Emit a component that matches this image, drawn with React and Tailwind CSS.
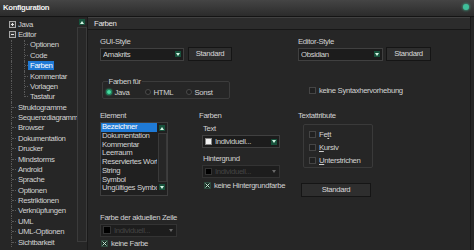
import React from "react";

const LINE = "border-[#595959]";

function Arrow({ up = false, dim = false }) {
  if (dim) {
    return (
      <span className="w-[6px] h-[6px] shrink-0 flex items-center justify-center">
        <span className="w-0 h-0 border-l-[2.5px] border-r-[2.5px] border-t-[3px] border-l-transparent border-r-transparent border-t-[#6a6a6a]" />
      </span>
    );
  }
  return (
    <span className="w-[6px] h-[6px] shrink-0 bg-[#17523c] flex items-center justify-center">
      {up ? (
        <span className="w-0 h-0 border-l-[2px] border-r-[2px] border-b-[3px] border-l-transparent border-r-transparent border-b-[#d6f7e6]" />
      ) : (
        <span className="w-0 h-0 border-l-[2px] border-r-[2px] border-t-[3px] border-l-transparent border-r-transparent border-t-[#d6f7e6]" />
      )}
    </span>
  );
}

function Combo({ w, children, disabled = false }) {
  return (
    <div
      className={
        disabled
          ? `${w} h-[13px] shrink-0 flex items-center border border-[#333333] bg-[#1d1d1d] pl-[2px] pr-[2px]`
          : `${w} h-[13px] shrink-0 flex items-center border border-[#404040] bg-[#1c1c1c] pl-[2px] pr-[2px]`
      }
    >
      <div className="flex-1 min-w-0 flex items-center gap-[3px] overflow-hidden whitespace-nowrap">{children}</div>
      <Arrow dim={disabled} />
    </div>
  );
}

function Button({ w, children }) {
  return (
    <div className={`${w} h-[14px] shrink-0 flex items-center justify-center border border-[#151515] bg-[#2e2e2e] text-[#d8d8d8]`}>
      {children}
    </div>
  );
}

function Check({ checked = false, children }) {
  return (
    <div className="flex items-center gap-[3px] whitespace-nowrap h-[9px]">
      {checked ? (
        <span className="w-[7px] h-[7px] shrink-0 border border-[#2c4a3d] bg-[#1c2d26] flex items-center justify-center">
          <svg width="5" height="5" viewBox="0 0 5 5">
            <path d="M0.5 0.5 L4.5 4.5 M4.5 0.5 L0.5 4.5" stroke="#bfe6d1" strokeWidth="1" />
          </svg>
        </span>
      ) : (
        <span className="w-[7px] h-[7px] shrink-0 border border-[#454545] bg-[#202020]" />
      )}
      <span>{children}</span>
    </div>
  );
}

function Radio({ selected = false, children, w }) {
  return (
    <div className={`${w} shrink-0 flex items-center gap-[3px]`}>
      {selected ? (
        <span className="w-[6px] h-[6px] rounded-full bg-[#46dca0] border border-[#1d7a57] shadow-[0_0_2px_#2fbf86]" />
      ) : (
        <span className="w-[6px] h-[6px] rounded-full bg-[#1f1f1f] border border-[#4a4a4a]" />
      )}
      <span>{children}</span>
    </div>
  );
}

const treeItems = [
  { t: "Java", exp: "+" },
  { t: "Editor", exp: "-" },
  { t: "Optionen", l: 1 },
  { t: "Code", l: 1 },
  { t: "Farben", l: 1, sel: true },
  { t: "Kommentar", l: 1 },
  { t: "Vorlagen", l: 1 },
  { t: "Tastatur", l: 1, last: true },
  { t: "Struktogramme" },
  { t: "Sequenzdiagramm" },
  { t: "Browser" },
  { t: "Dokumentation" },
  { t: "Drucker" },
  { t: "Mindstorms" },
  { t: "Android" },
  { t: "Sprache" },
  { t: "Optionen" },
  { t: "Restriktionen" },
  { t: "Verknüpfungen" },
  { t: "UML" },
  { t: "UML-Optionen" },
  { t: "Sichtbarkeit" },
];

function Expander({ plus }) {
  return (
    <svg width="7" height="7" viewBox="0 0 7 7">
      <rect x="0.5" y="0.5" width="6" height="6" fill="#3a3a3a" stroke="#a8a8a8" strokeWidth="1" />
      <path d="M2 3.5 H5" stroke="#e6e6e6" strokeWidth="1" />
      {plus && <path d="M3.5 2 V5" stroke="#e6e6e6" strokeWidth="1" />}
    </svg>
  );
}

function TreeRow({ item }) {
  const { t, l = 0, exp, sel, last } = item;
  return (
    <div className="flex h-[10.38px] items-stretch">
      <div className="w-[8px] shrink-0" />
      {exp ? (
        <div className="w-[8px] shrink-0 flex items-center">
          <span className="ml-px flex">
            <Expander plus={exp === "+"} />
          </span>
        </div>
      ) : (
        <div className="w-[8px] shrink-0 flex">
          <div className="w-[3px]" />
          <div className={`w-px border-l border-dotted ${LINE}`} />
          {l === 0 && (
            <div className="flex items-center">
              <div className={`w-[4px] border-t border-dotted ${LINE}`} />
            </div>
          )}
        </div>
      )}
      {l === 1 && (
        <div className="w-[12px] shrink-0 flex">
          <div className="w-[8px]" />
          <div className="w-px flex flex-col">
            <div className={last ? `h-1/2 border-l border-dotted ${LINE}` : `flex-1 border-l border-dotted ${LINE}`} />
          </div>
          <div className="flex items-center">
            <div className={`w-[3px] border-t border-dotted ${LINE}`} />
          </div>
        </div>
      )}
      <div className="flex items-center whitespace-nowrap">
        <span className={sel ? "px-[2px] h-[8.5px] flex items-center bg-[#1f7ad6] text-white" : "px-[2px]"}>{t}</span>
      </div>
    </div>
  );
}

const listItems = [
  "Bezeichner",
  "Dokumentation",
  "Kommentar",
  "Leerraum",
  "Reserviertes Wort",
  "String",
  "Symbol",
  "Ungültiges Symbol",
];

export default function App() {
  return (
    <div className="w-[474px] h-[250px] overflow-hidden bg-[#262626] text-[#d2d2d2] font-['Liberation_Sans',Arial,sans-serif] text-[7.75px] tracking-[-0.35px] leading-[9px] flex flex-col">
      {/* Title bar */}
      <div className="h-[17px] shrink-0 flex items-center justify-between pl-[3px] pr-[5px] bg-gradient-to-b from-[#454545] to-[#2b2b2b] border-b border-[#141414]">
        <span className="font-bold text-[#f0f0f0] -mt-px">Konfiguration</span>
        <span className="w-[6px] h-[6px] rounded-full bg-[#3fbf9a] shadow-[0_0_3px_#3fd4a6] -mt-[2px]" />
      </div>

      <div className="flex flex-1 min-h-0">
        {/* Tree */}
        <div className="w-[77px] shrink-0 pt-[2px] overflow-hidden">
          {treeItems.map((it, i) => (
            <TreeRow key={i} item={it} />
          ))}
        </div>

        {/* Tree scrollbar */}
        <div className="w-[10px] shrink-0 flex flex-col items-center pt-[2px] pb-[8px]">
          <Arrow up />
          <div className="mt-[2px] w-[10px] flex-1 border border-[#3b3b3b] bg-[#282828]" />
        </div>

        {/* Panel */}
        <div className="w-[384px] shrink-0 flex flex-col border-l border-r border-[#1a1a1a]">
          <div className="h-[13px] shrink-0 flex items-center pl-[6px] bg-[#2c2c2c] border-t border-[#414141] border-b border-b-[#171717] text-[#e6e6e6]">
            Farben
          </div>

          <div className="pl-[12px]">
            {/* Row 1 */}
            <div className="grid grid-cols-[99px_98px_1fr] pt-[7px]">
              <div className="col-span-2">
                <div>GUI-Style</div>
                <div className="flex items-end gap-[4px] mt-[0.5px]">
                  <Combo w="w-[84px]">
                    <span>Amakrits</span>
                  </Combo>
                  <Button w="w-[44px]">Standard</Button>
                </div>
              </div>
              <div className="pl-px">
                <div>Editor-Style</div>
                <div className="flex items-end gap-[3px] mt-[0.5px]">
                  <Combo w="w-[85px]">
                    <span>Obsidian</span>
                  </Combo>
                  <Button w="w-[45px]">Standard</Button>
                </div>
              </div>
            </div>

            {/* Row 2 */}
            <div className="grid grid-cols-[99px_98px_1fr] mt-[16px]">
              <div className="col-span-2">
                <fieldset className="ml-[1.5px] w-[124px] border border-[#3c3c3c] rounded-[2px] px-[3px] pb-px">
                  <legend className="ml-[2px] px-px">Farben für</legend>
                  <div className="flex items-center h-[10px] mt-[1.5px]">
                    <Radio selected w="w-[39px]">
                      Java
                    </Radio>
                    <Radio w="w-[41px]">HTML</Radio>
                    <Radio w="w-[40px]">Sonst</Radio>
                  </div>
                </fieldset>
              </div>
              <div className="pl-[12px] pt-[9.5px]">
                <Check>keine Syntaxhervorhebung</Check>
              </div>
            </div>

            {/* Row 3 */}
            <div className="grid grid-cols-[99px_98px_1fr] mt-[11.5px]">
              <div>
                <div>Element</div>
                <div className="mt-[2.5px] w-[68px] h-[74px] border border-[#3e3e3e] bg-[#202020] flex">
                  <div className="flex-1 min-w-0 overflow-hidden">
                    {listItems.map((s, i) => (
                      <div
                        key={i}
                        className={
                          i === 0
                            ? "h-[8.75px] leading-[8.75px] pl-px whitespace-nowrap bg-[#1f7ad6] text-white"
                            : "h-[8.75px] leading-[8.75px] pl-px whitespace-nowrap"
                        }
                      >
                        {s}
                      </div>
                    ))}
                  </div>
                  <div className="w-[10px] shrink-0 flex flex-col items-center pt-[2px] pb-[5px]">
                    <Arrow up />
                    <div className="my-[2px] w-[9px] flex-1 border border-[#3a3a3a] bg-[#262626]" />
                    <Arrow />
                  </div>
                </div>
              </div>

              <div className="whitespace-nowrap">
                <div>Farben</div>
                <div className="pl-[3px]">
                  <div className="mt-[4.5px] pl-px">Text</div>
                  <div className="mt-[2px]">
                    <Combo w="w-[78px]">
                      <span className="w-[7px] h-[7px] shrink-0 bg-[#f2f2f2] border border-[#888]" />
                      <span>Individuell...</span>
                    </Combo>
                  </div>
                  <div className="mt-[6px] pl-px">Hintergrund</div>
                  <div className="mt-[1.5px]">
                    <Combo w="w-[78px]" disabled>
                      <span className="w-[7px] h-[7px] shrink-0 bg-black border border-[#333]" />
                      <span className="text-[#444444]">Individuell...</span>
                    </Combo>
                  </div>
                  <div className="mt-[3px] pl-[2px]">
                    <Check checked>keine Hintergrundfarbe</Check>
                  </div>
                </div>
              </div>

              <div>
                <div className="pl-px">Textattribute</div>
                <div className="mt-[4px] ml-[6px] w-[70px] h-[44px] border border-[#3a3a3a] rounded-[2px] pl-[5px] pt-[5px] flex flex-col gap-[4px]">
                  <Check>
                    Fe<span className="underline">t</span>t
                  </Check>
                  <Check>
                    <span className="underline">K</span>ursiv
                  </Check>
                  <Check>
                    <span className="underline">U</span>nterstrichen
                  </Check>
                </div>
                <div className="mt-[15px] ml-[4px]">
                  <Button w="w-[70px]">Standard</Button>
                </div>
              </div>
            </div>

            {/* Row 4 */}
            <div className="mt-[16.5px]">
              <div>Farbe der aktuellen Zeile</div>
              <div className="mt-[1.5px]">
                <Combo w="w-[77px]" disabled>
                  <span className="w-[8px] h-[8px] shrink-0 bg-black border border-[#333]" />
                  <span className="text-[#444444]">Individuell...</span>
                </Combo>
              </div>
              <div className="mt-[2.5px] pl-px">
                <Check checked>keine Farbe</Check>
              </div>
            </div>
          </div>
        </div>
      </div>
    </div>
  );
}
